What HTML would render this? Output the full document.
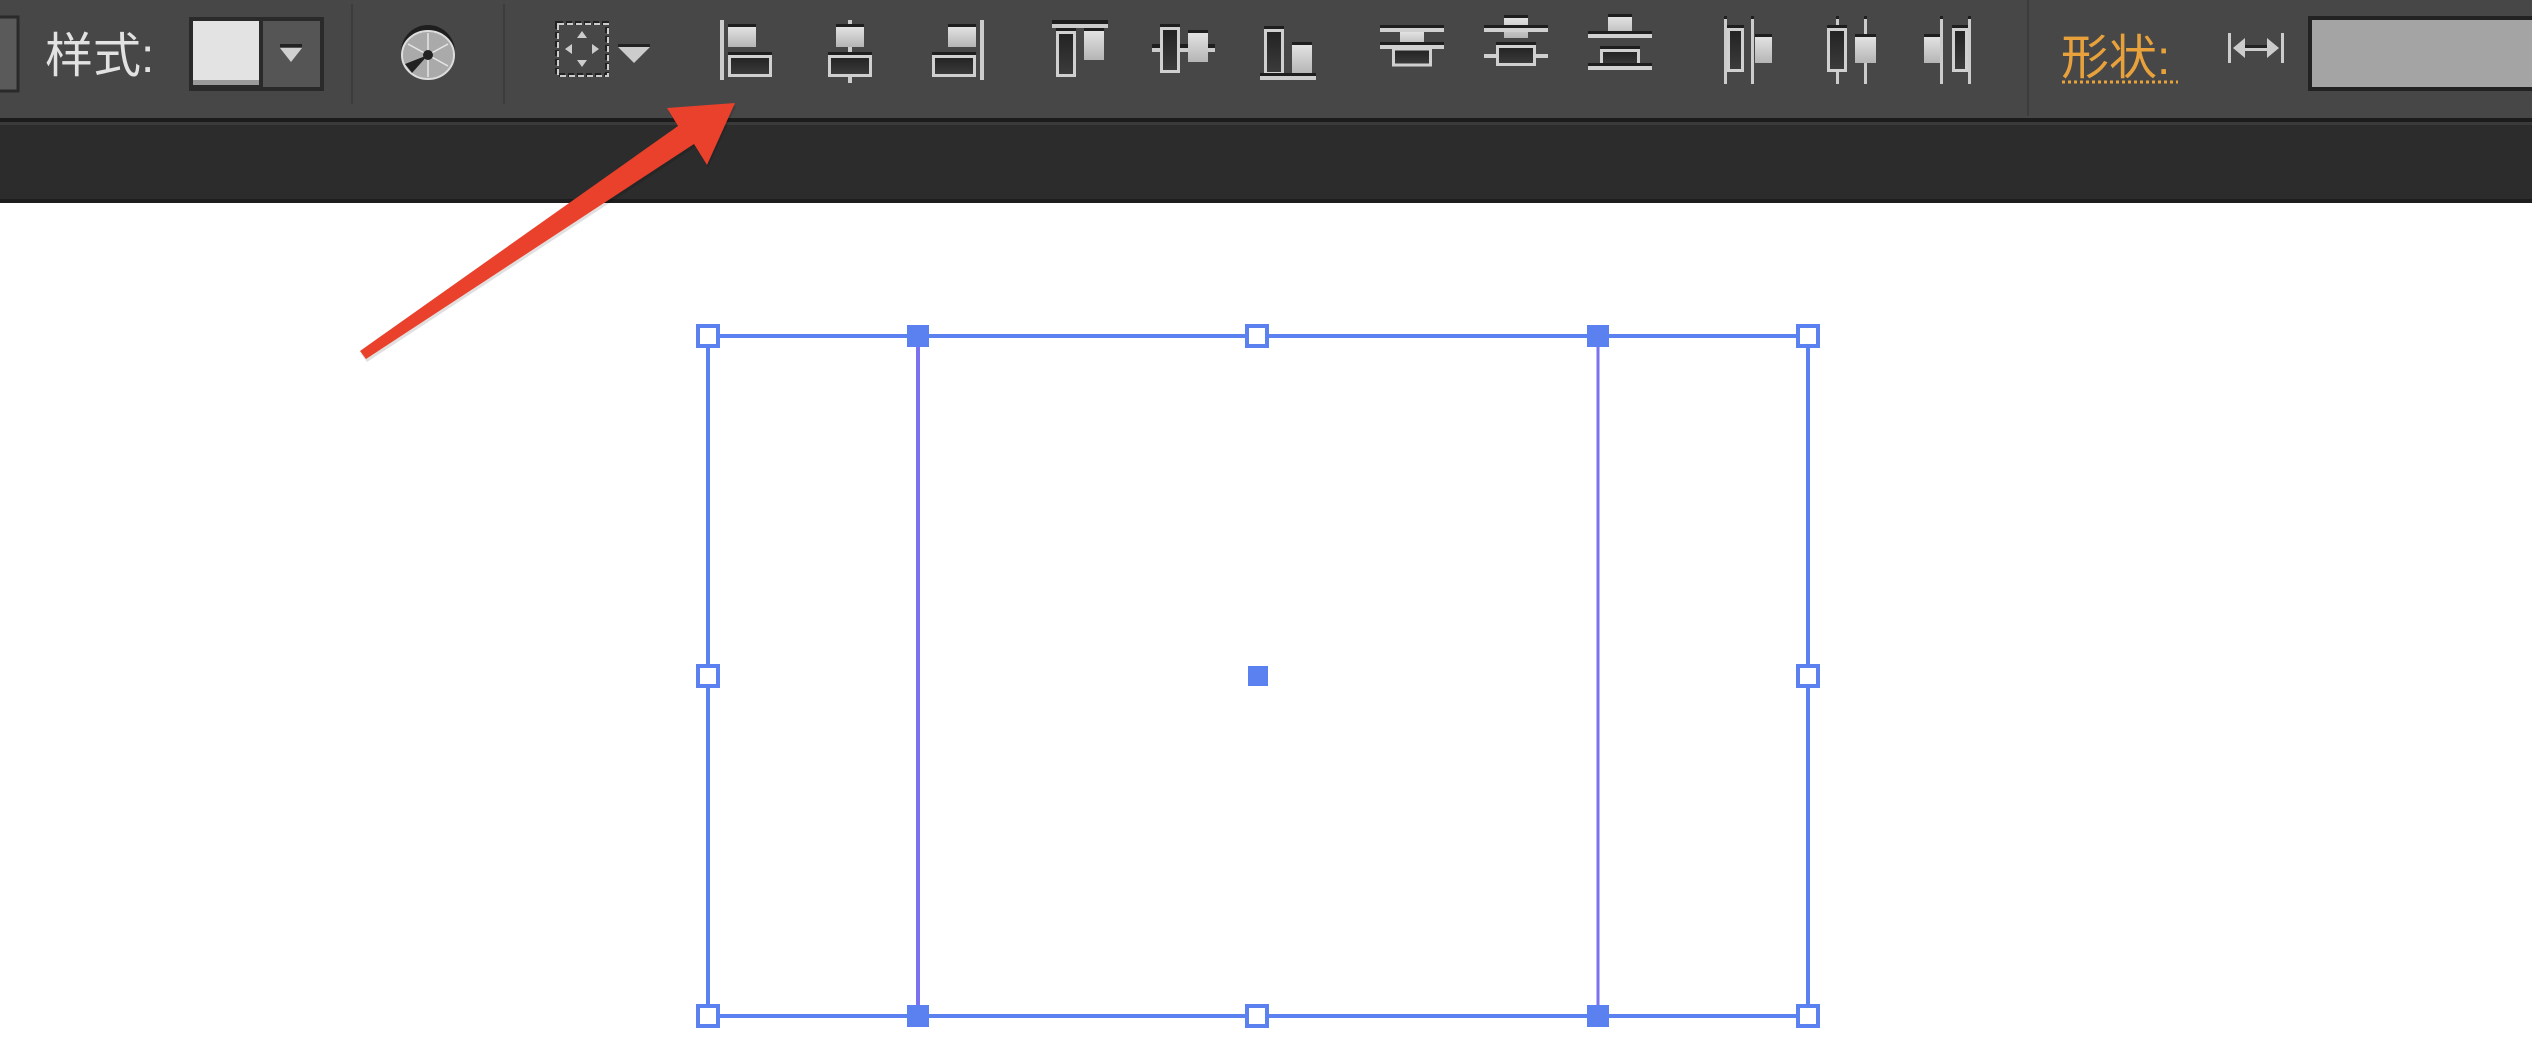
<!DOCTYPE html>
<html><head><meta charset="utf-8"><style>
html,body{margin:0;padding:0;width:2532px;height:1064px;overflow:hidden;background:#fff;}
svg{display:block}
</style></head><body>
<svg width="2532" height="1064" viewBox="0 0 2532 1064" xmlns="http://www.w3.org/2000/svg">
<defs>
<linearGradient id="lg" x1="0" y1="0" x2="0" y2="1"><stop offset="0" stop-color="#e2e2e2"/><stop offset="1" stop-color="#b5b5b5"/></linearGradient>
<linearGradient id="dg" x1="0" y1="0" x2="0" y2="1"><stop offset="0" stop-color="#222"/><stop offset="1" stop-color="#3c3c3c"/></linearGradient>
</defs>
<rect x="0" y="0" width="2532" height="118" fill="#474747"/>
<rect x="0" y="118" width="2532" height="4" fill="#1c1c1c"/>
<rect x="0" y="122" width="2532" height="3" fill="#3a3a3a"/>
<rect x="0" y="125" width="2532" height="76" fill="#2c2c2c"/>
<rect x="0" y="199" width="2532" height="4" fill="#1e1e1e"/>
<rect x="-4" y="17" width="22" height="74" fill="#5a5a5a" stroke="#2a2a2a" stroke-width="3"/>
<text x="45" y="72" font-family="Liberation Sans, Noto Sans CJK SC, sans-serif" font-size="48" fill="#e2e2e2">样式:</text>
<rect x="189" y="17" width="135" height="74" fill="#2a2a2a"/>
<rect x="193" y="21" width="66" height="64" fill="#e3e3e3"/>
<rect x="193" y="80" width="66" height="5" fill="#9a9a9a"/>
<rect x="263" y="21" width="57" height="66" fill="#555"/>
<rect x="280" y="44" width="22" height="3" fill="#222"/>
<path d="M280 48 L302 48 L291 62 Z" fill="#d0d0d0"/>
<rect x="351" y="4" width="2" height="100" fill="#3c3c3c"/>
<rect x="503" y="4" width="2" height="100" fill="#3c3c3c"/>
<rect x="2027" y="0" width="2" height="116" fill="#3c3c3c"/>
<ellipse cx="428" cy="52" rx="27" ry="27" fill="#1e1e1e"/>
<ellipse cx="428" cy="55" rx="26" ry="24" fill="#aaa" stroke="#ddd" stroke-width="2"/>
<g stroke="#e6e6e6" stroke-width="1.5"><line x1="428" y1="33" x2="428" y2="77"/><line x1="408" y1="44" x2="448" y2="66"/><line x1="408" y1="66" x2="448" y2="44"/></g>
<path d="M428 55 L405 64 L412 73 Z" fill="#222"/>
<circle cx="428" cy="55" r="5" fill="#222"/>
<rect x="557" y="23" width="50" height="52" fill="none" stroke="#222" stroke-width="4" stroke-dasharray="6 3"/>
<rect x="557" y="23" width="50" height="52" fill="none" stroke="#ccc" stroke-width="2" stroke-dasharray="6 3" transform="translate(1,1)"/>
<path d="M582 31 l5 7 h-10z M582 67 l5 -7 h-10z M565 49 l7 -5 v10z M599 49 l-7 -5 v10z" fill="#ccc"/>
<rect x="618" y="44" width="32" height="3" fill="#222"/>
<path d="M618 47 L650 47 L634 63 Z" fill="#ccc"/>
<g>
<rect x="720" y="20" width="4" height="60" fill="#ccc"/>
<rect x="728" y="24" width="28" height="3" fill="#1e1e1e"/><rect x="728" y="27" width="28" height="20" fill="url(#lg)"/>
<rect x="728" y="52" width="44" height="3" fill="#1e1e1e"/><rect x="729.5" y="56.5" width="41" height="19" fill="url(#dg)" stroke="#d0d0d0" stroke-width="3"/>
</g>
<g>
<rect x="848" y="20" width="4" height="63" fill="#ccc"/>
<rect x="836" y="24" width="28" height="3" fill="#1e1e1e"/><rect x="836" y="27" width="28" height="20" fill="url(#lg)"/>
<rect x="828" y="52" width="44" height="3" fill="#1e1e1e"/><rect x="829.5" y="56.5" width="41" height="19" fill="url(#dg)" stroke="#d0d0d0" stroke-width="3"/>
</g>
<g>
<rect x="980" y="20" width="4" height="60" fill="#ccc"/>
<rect x="948" y="24" width="28" height="3" fill="#1e1e1e"/><rect x="948" y="27" width="28" height="20" fill="url(#lg)"/>
<rect x="932" y="52" width="44" height="3" fill="#1e1e1e"/><rect x="933.5" y="56.5" width="41" height="19" fill="url(#dg)" stroke="#d0d0d0" stroke-width="3"/>
</g>
<g>
<rect x="1052" y="20" width="56" height="4" fill="#1e1e1e"/><rect x="1052" y="24" width="56" height="4" fill="#ccc"/>
<rect x="1056" y="28" width="20" height="3" fill="#1e1e1e"/><rect x="1057.5" y="32.5" width="17" height="43" fill="url(#dg)" stroke="#d0d0d0" stroke-width="3"/>
<rect x="1084" y="28" width="20" height="3" fill="#1e1e1e"/><rect x="1084" y="31" width="20" height="29" fill="url(#lg)"/>
</g>
<g>
<rect x="1152" y="44" width="63" height="4" fill="#1e1e1e"/><rect x="1152" y="48" width="63" height="4" fill="#ccc"/>
<rect x="1160" y="24" width="20" height="3" fill="#1e1e1e"/><rect x="1161.5" y="28.5" width="17" height="43" fill="url(#dg)" stroke="#d0d0d0" stroke-width="3"/>
<rect x="1188" y="30" width="20" height="3" fill="#1e1e1e"/><rect x="1188" y="33" width="20" height="29" fill="url(#lg)"/>
</g>
<g>
<rect x="1264" y="26" width="20" height="3" fill="#1e1e1e"/><rect x="1265.5" y="30.5" width="17" height="43" fill="url(#dg)" stroke="#d0d0d0" stroke-width="3"/>
<rect x="1292" y="42" width="20" height="3" fill="#1e1e1e"/><rect x="1292" y="45" width="20" height="29" fill="url(#lg)"/>
<rect x="1260" y="73" width="56" height="3" fill="#1e1e1e"/><rect x="1260" y="76" width="56" height="4" fill="#ccc"/>
</g>
<g>
<rect x="1380" y="25" width="64" height="3" fill="#1e1e1e"/><rect x="1380" y="28" width="64" height="4" fill="#d0d0d0"/>
<rect x="1400" y="32" width="24" height="15" fill="url(#lg)"/>
<rect x="1380" y="42" width="64" height="3" fill="#1e1e1e"/><rect x="1380" y="45" width="64" height="4" fill="#d0d0d0"/>
<rect x="1393.5" y="49" width="37" height="16" fill="url(#dg)" stroke="#d0d0d0" stroke-width="3"/>
</g>
<g>
<rect x="1504" y="15" width="24" height="3" fill="#1e1e1e"/><rect x="1504" y="18" width="24" height="20" fill="url(#lg)"/>
<rect x="1484" y="25" width="64" height="3" fill="#1e1e1e"/><rect x="1484" y="28" width="64" height="4" fill="#d0d0d0"/>
<rect x="1496" y="42" width="40" height="3" fill="#1e1e1e"/><rect x="1497.5" y="46.5" width="37" height="18" fill="url(#dg)" stroke="#d0d0d0" stroke-width="3"/>
<rect x="1484" y="54" width="12" height="4" fill="#d0d0d0"/><rect x="1536" y="54" width="12" height="4" fill="#d0d0d0"/>
</g>
<g>
<rect x="1608" y="14" width="24" height="3" fill="#1e1e1e"/><rect x="1608" y="17" width="24" height="20" fill="url(#lg)"/>
<rect x="1588" y="31" width="64" height="3" fill="#1e1e1e"/><rect x="1588" y="34" width="64" height="4" fill="#d0d0d0"/>
<rect x="1600" y="46" width="40" height="3" fill="#1e1e1e"/><rect x="1601.5" y="50.5" width="37" height="16" fill="url(#dg)" stroke="#d0d0d0" stroke-width="3"/>
<rect x="1588" y="63" width="64" height="3" fill="#1e1e1e"/><rect x="1588" y="66" width="64" height="4" fill="#d0d0d0"/>
</g>
<g>
<rect x="1724" y="16" width="3" height="68" fill="#ccc"/><rect x="1751" y="16" width="3" height="68" fill="#ccc"/>
<rect x="1724" y="16" width="3" height="3" fill="#1e1e1e"/><rect x="1751" y="16" width="3" height="3" fill="#1e1e1e"/>
<rect x="1727" y="25" width="17" height="3" fill="#1e1e1e"/><rect x="1728.5" y="29.5" width="14" height="41" fill="url(#dg)" stroke="#d0d0d0" stroke-width="3"/>
<rect x="1755" y="34" width="17" height="3" fill="#1e1e1e"/><rect x="1755" y="37" width="17" height="26" fill="url(#lg)"/>
</g>
<g>
<rect x="1836" y="16" width="3" height="68" fill="#ccc"/><rect x="1864" y="16" width="3" height="68" fill="#ccc"/>
<rect x="1836" y="16" width="3" height="3" fill="#1e1e1e"/><rect x="1864" y="16" width="3" height="3" fill="#1e1e1e"/>
<rect x="1827" y="25" width="20" height="3" fill="#1e1e1e"/><rect x="1828.5" y="29.5" width="17" height="41" fill="url(#dg)" stroke="#d0d0d0" stroke-width="3"/>
<rect x="1855" y="34" width="21" height="3" fill="#1e1e1e"/><rect x="1855" y="37" width="21" height="26" fill="url(#lg)"/>
</g>
<g>
<rect x="1940" y="16" width="3" height="68" fill="#ccc"/><rect x="1968" y="16" width="3" height="68" fill="#ccc"/>
<rect x="1940" y="16" width="3" height="3" fill="#1e1e1e"/><rect x="1968" y="16" width="3" height="3" fill="#1e1e1e"/>
<rect x="1924" y="34" width="16" height="3" fill="#1e1e1e"/><rect x="1924" y="37" width="16" height="26" fill="url(#lg)"/>
<rect x="1952" y="25" width="16" height="3" fill="#1e1e1e"/><rect x="1953.5" y="29.5" width="13" height="41" fill="url(#dg)" stroke="#d0d0d0" stroke-width="3"/>
</g>
<text x="2061" y="74" font-family="Liberation Sans, Noto Sans CJK SC, sans-serif" font-size="48" fill="#e9a23b">形状:</text>
<line x1="2062" y1="82" x2="2178" y2="82" stroke="#e9a23b" stroke-width="3" stroke-dasharray="3 3"/>
<rect x="2228" y="33" width="3" height="30" fill="#ccc"/><rect x="2281" y="33" width="3" height="30" fill="#ccc"/>
<path d="M2233 48 L2245 38 L2245 58 Z M2279 48 L2267 38 L2267 58 Z" fill="#ccc"/>
<rect x="2245" y="45" width="22" height="3" fill="#222"/><rect x="2245" y="48" width="22" height="3" fill="#ccc"/>
<rect x="2308" y="16" width="240" height="75" fill="#222"/>
<rect x="2312" y="20" width="240" height="67" fill="#a4a4a4"/>

<g fill="none" stroke="#5b80ef" stroke-width="4">
<rect x="708" y="336" width="1100" height="680"/>
</g>
<line x1="918" y1="336" x2="918" y2="1016" stroke="#7a72ee" stroke-width="4"/>
<line x1="1598" y1="336" x2="1598" y2="1016" stroke="#7a72ee" stroke-width="3"/>
<g fill="#fff" stroke="#5b80ef" stroke-width="4">
<rect x="698" y="326" width="20" height="20"/><rect x="1247" y="326" width="20" height="20"/><rect x="1798" y="326" width="20" height="20"/>
<rect x="698" y="666" width="20" height="20"/><rect x="1798" y="666" width="20" height="20"/>
<rect x="698" y="1006" width="20" height="20"/><rect x="1247" y="1006" width="20" height="20"/><rect x="1798" y="1006" width="20" height="20"/>
</g>
<g fill="#5b80ef">
<rect x="907" y="325" width="22" height="22"/><rect x="1587" y="325" width="22" height="22"/>
<rect x="907" y="1005" width="22" height="22"/><rect x="1587" y="1005" width="22" height="22"/>
<rect x="1248" y="666" width="20" height="20"/>
</g>
<path d="M360 351 L678 126 L667 108 L735 103 L707 165 L694 144 L366 359 Z" fill="#000" opacity="0.12" transform="translate(1,3)"/>
<path d="M360 351 L678 126 L667 108 L735 103 L707 165 L694 144 L366 359 Z" fill="#e9412b"/>
</svg>
</body></html>
